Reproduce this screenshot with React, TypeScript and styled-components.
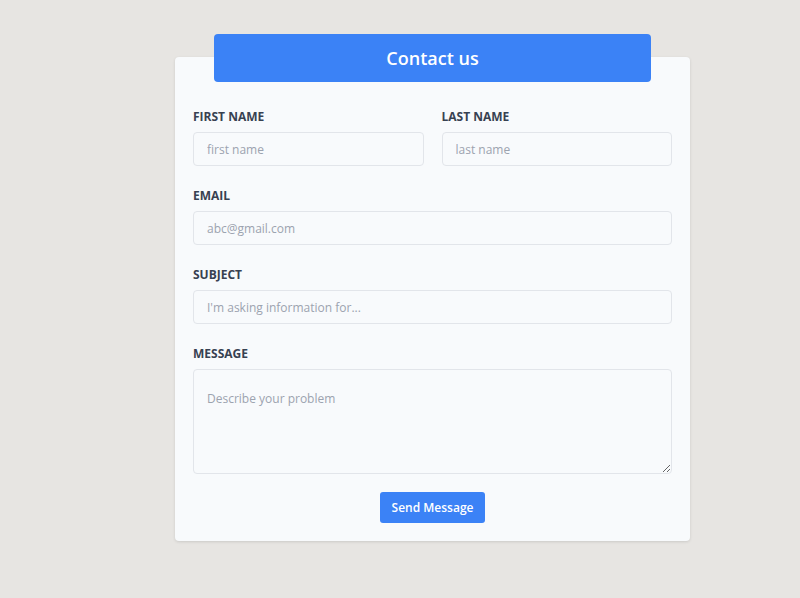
import React from "react";
import styled, { createGlobalStyle } from "styled-components";

const GlobalStyle = createGlobalStyle`
  html, body {
    margin: 0;
    padding: 0;
    background: #e7e5e2;
    font-family: "Open Sans", "Noto Sans", "Liberation Sans", sans-serif;
  }
  * {
    box-sizing: border-box;
  }
`;

const Page = styled.div`
  min-height: 598px;
  padding: 57px 0 0 175px;
`;

const Card = styled.form`
  width: 515px;
  background: #f8fafc;
  border-radius: 4px;
  box-shadow: 0 1px 3px rgba(0, 0, 0, 0.12);
  padding: 0 18px 18px;
  display: flex;
  flex-direction: column;
`;

const Header = styled.div`
  width: 437px;
  height: 48px;
  margin: -23px auto 0;
  background: #3b82f6;
  border-radius: 4px;
  display: flex;
  align-items: center;
  justify-content: center;
  color: #ffffff;
  font-size: 18px;
  font-weight: 600;
`;

const Fields = styled.div`
  margin-top: 27px;
  display: flex;
  flex-direction: column;
  gap: 22px;
`;

const Row = styled.div`
  display: grid;
  grid-template-columns: 1fr 1fr;
  gap: 18px;
`;

const Field = styled.label`
  display: flex;
  flex-direction: column;
`;

const Label = styled.span`
  font-size: 12px;
  font-weight: 700;
  line-height: 16px;
  color: #374151;
  margin-bottom: 7px;
`;

const Input = styled.input`
  height: 34px;
  width: 100%;
  padding: 0 13px;
  background: #f8fafc;
  border: 1px solid #e2e5ea;
  border-radius: 4px;
  font-family: inherit;
  font-size: 12px;
  color: #374151;
  outline: none;
  &::placeholder {
    color: #9ca3af;
  }
`;

const TextArea = styled.textarea`
  height: 105px;
  width: 100%;
  padding: 20px 13px;
  background: #f8fafc;
  border: 1px solid #e2e5ea;
  border-radius: 4px;
  font-family: inherit;
  font-size: 12px;
  line-height: 18px;
  color: #374151;
  outline: none;
  resize: vertical;
  &::placeholder {
    color: #9ca3af;
  }
`;

const Actions = styled.div`
  display: flex;
  justify-content: center;
  margin-top: 18px;
`;

const SendButton = styled.button`
  width: 105px;
  height: 31px;
  background: #3b82f6;
  border: 0;
  border-radius: 3px;
  color: #ffffff;
  font-family: inherit;
  font-size: 12px;
  font-weight: 600;
  cursor: pointer;
`;

const App = () => {
  return (
    <>
      <GlobalStyle />
      <Page>
        <Card onSubmit={(e) => e.preventDefault()}>
          <Header>Contact us</Header>
          <Fields>
            <Row>
              <Field>
                <Label>FIRST NAME</Label>
                <Input placeholder="first name" />
              </Field>
              <Field>
                <Label>LAST NAME</Label>
                <Input placeholder="last name" />
              </Field>
            </Row>
            <Field>
              <Label>EMAIL</Label>
              <Input type="email" placeholder="abc@gmail.com" />
            </Field>
            <Field>
              <Label>SUBJECT</Label>
              <Input placeholder="I'm asking information for..." />
            </Field>
            <Field>
              <Label>MESSAGE</Label>
              <TextArea placeholder="Describe your problem" />
            </Field>
          </Fields>
          <Actions>
            <SendButton type="submit">Send Message</SendButton>
          </Actions>
        </Card>
      </Page>
    </>
  );
};

export default App;
